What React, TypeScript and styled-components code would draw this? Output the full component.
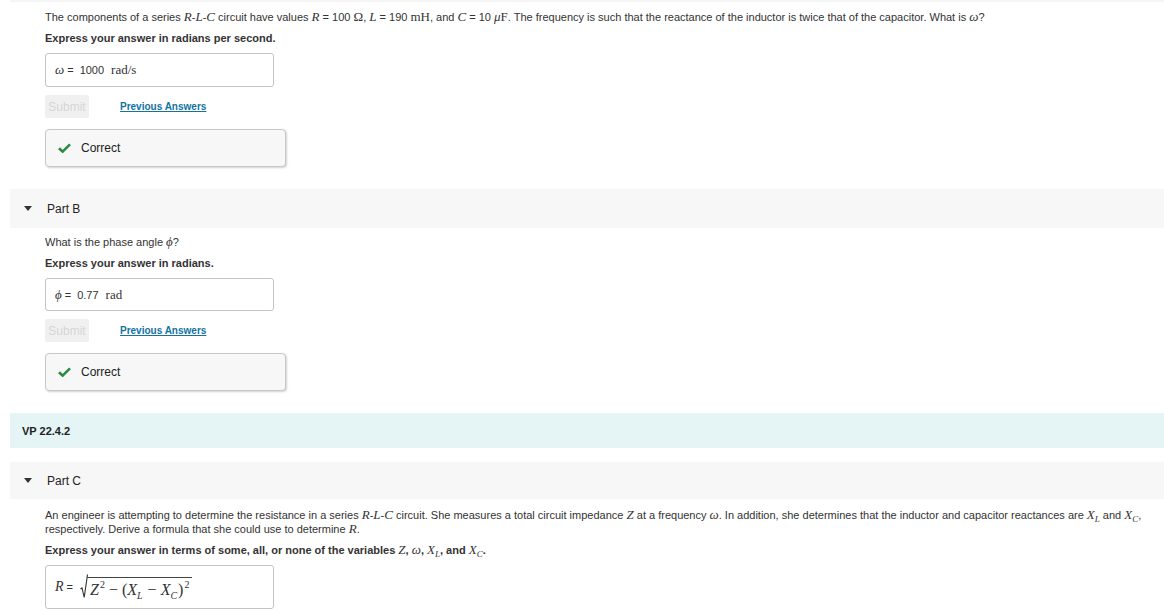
import React from 'react';
import styled, { createGlobalStyle } from 'styled-components';

const GlobalStyle = createGlobalStyle`
  body {
    margin: 0;
    background: #fff;
    font-family: "Liberation Sans", Arial, sans-serif;
    color: #333;
  }
`;

const Page = styled.div`
  padding-left: 10px;
  width: 1154px;
`;

const TopBar = styled.div`
  height: 2px;
  background: #f5f5f5;
`;

const Section = styled.div<{ $top?: number }>`
  padding: ${(p) => p.$top ?? 7}px 0 0 35px;
`;

const Question = styled.p`
  margin: 0;
  font-size: 11px;
  line-height: 13px;
  color: #333;
`;

const Instruction = styled.p`
  margin: 7px 0 0;
  font-size: 11px;
  line-height: 14px;
  font-weight: bold;
  color: #333;
`;

const M = styled.span`
  font-family: "Liberation Serif", "Times New Roman", serif;
  font-style: italic;
  font-weight: normal;
  font-size: 13px;
`;

const Mr = styled.span`
  font-family: "Liberation Serif", "Times New Roman", serif;
  font-weight: normal;
  font-size: 13px;
`;

const Sub = styled.sub`
  font-family: "Liberation Serif", "Times New Roman", serif;
  font-style: italic;
  font-weight: normal;
  font-size: 9px;
  vertical-align: -3px;
  line-height: 0;
`;

const Sup = styled.sup`
  font-family: "Liberation Serif", "Times New Roman", serif;
  font-weight: normal;
  font-size: 10px;
  vertical-align: 7px;
  line-height: 0;
`;

const Op = styled.span`
  font-family: "Liberation Serif", "Times New Roman", serif;
  margin: 0 4px;
`;

const AnswerBox = styled.div<{ $h?: number }>`
  margin-top: 8px;
  box-sizing: border-box;
  width: 229px;
  height: ${(p) => p.$h ?? 34}px;
  border: 1px solid #c4c4c4;
  border-radius: 3px;
  display: flex;
  align-items: center;
  padding-left: 9px;
  font-size: 11px;
  color: #333;
  white-space: pre;
`;

const Eq = styled.span<{ $after?: number }>`
  font-size: 11px;
  margin: 0 ${(p) => p.$after ?? 6}px 0 3px;
`;

const Unit = styled.span`
  font-family: "Liberation Serif", "Times New Roman", serif;
  font-size: 13px;
  margin-left: 7px;
`;

const Actions = styled.div`
  display: flex;
  align-items: center;
  margin-top: 8px;
  gap: 31px;
`;

const SubmitButton = styled.button`
  width: 44px;
  height: 23px;
  border: none;
  border-radius: 2px;
  background: #f0f0f0;
  color: #d6d6d6;
  font-family: "Liberation Sans", Arial, sans-serif;
  font-size: 12px;
  padding: 0;
`;

const PrevLink = styled.a`
  font-size: 10px;
  font-weight: bold;
  color: #1273a0;
  text-decoration: underline;
`;

const Feedback = styled.div`
  margin-top: 11px;
  box-sizing: border-box;
  width: 241px;
  height: 38px;
  background: #f7f7f7;
  border: 1px solid #c8c8c8;
  border-radius: 4px;
  box-shadow: 1px 1px 2px rgba(0, 0, 0, 0.18);
  display: flex;
  align-items: center;
  padding-left: 12px;
  gap: 10px;
  font-size: 12px;
  color: #222;
`;

const PartHeader = styled.div<{ $mt: number; $h: number }>`
  margin-top: ${(p) => p.$mt}px;
  height: ${(p) => p.$h}px;
  background: #f7f7f7;
  display: flex;
  align-items: center;
  padding-left: 14px;
  gap: 15px;
  font-size: 12px;
  color: #222;
`;

const Caret = styled.span`
  width: 0;
  height: 0;
  border-left: 4px solid transparent;
  border-right: 4px solid transparent;
  border-top: 5px solid #333;
`;

const VpHeader = styled.div`
  margin-top: 22px;
  height: 35px;
  background: #e5f5f6;
  display: flex;
  align-items: center;
  padding-left: 12px;
  font-size: 11px;
  font-weight: bold;
  color: #222;
`;

const Radical = styled.span`
  display: inline-flex;
  align-items: flex-end;
`;

const Radicand = styled.span`
  border-top: 1px solid #444;
  padding: 2px 3px 0 3px;
  line-height: 20px;
  font-family: "Liberation Serif", "Times New Roman", serif;
  font-size: 16px;

  ${M} {
    font-size: 16px;
  }

  ${Sub} {
    font-size: 10px;
    vertical-align: -4px;
    margin-right: 1px;
  }

  ${Sup} {
    margin-left: 1px;
  }
`;

const FormulaLetter = styled(M)`
  font-size: 14px;
`;

const Check = () => (
  <svg width="13" height="10" viewBox="0 0 13 10">
    <path d="M1 5.2 L4.6 8.6 L12 1.4" fill="none" stroke="#2b8a3e" strokeWidth="2.6" />
  </svg>
);

const RadicalSign = () => (
  <svg width="8" height="25" viewBox="0 0 8 25" style={{ marginRight: -1, marginBottom: 1 }}>
    <path d="M0.5 15 L2 14 L4.2 23.5 L7.5 0.5" fill="none" stroke="#333" strokeWidth="1.1" />
  </svg>
);

const SubmitRow = () => (
  <Actions>
    <SubmitButton disabled>Submit</SubmitButton>
    <PrevLink>Previous Answers</PrevLink>
  </Actions>
);

const CorrectBox = () => (
  <Feedback>
    <Check />
    <span>Correct</span>
  </Feedback>
);

export default function App() {
  return (
    <Page>
      <GlobalStyle />
      <TopBar />
      <Section $top={8}>
        <Question>
          The components of a series <M>R</M>-<M>L</M>-<M>C</M> circuit have values <M>R</M> = 100 <Mr>Ω</Mr>,{' '}
          <M>L</M> = 190 <Mr>mH</Mr>, and <M>C</M> = 10 <M>μ</M>
          <Mr>F</Mr>. The frequency is such that the reactance of the inductor is twice that of the capacitor. What is <M>ω</M>?
        </Question>
        <Instruction>Express your answer in radians per second.</Instruction>
        <AnswerBox>
          <M>ω</M>
          <Eq>=</Eq>1000<Unit>rad/s</Unit>
        </AnswerBox>
        <SubmitRow />
        <CorrectBox />
      </Section>
      <PartHeader $mt={22} $h={39}>
        <Caret />
        <span>Part B</span>
      </PartHeader>
      <Section $top={7}>
        <Question>
          What is the phase angle <M>ϕ</M>?
        </Question>
        <Instruction>Express your answer in radians.</Instruction>
        <AnswerBox $h={33}>
          <M>ϕ</M>
          <Eq>=</Eq>0.77<Unit>rad</Unit>
        </AnswerBox>
        <SubmitRow />
        <CorrectBox />
      </Section>
      <VpHeader>VP 22.4.2</VpHeader>
      <PartHeader $mt={14} $h={37}>
        <Caret />
        <span>Part C</span>
      </PartHeader>
      <Section $top={9}>
        <Question>
          An engineer is attempting to determine the resistance in a series <M>R</M>-<M>L</M>-<M>C</M> circuit. She measures a
          total circuit impedance <M>Z</M> at a frequency <M>ω</M>. In addition, she determines that the inductor and
          capacitor reactances are <M>X</M>
          <Sub>L</Sub> and <M>X</M>
          <Sub>C</Sub>, respectively. Derive a formula that she could use to determine <M>R</M>.
        </Question>
        <Instruction>
          Express your answer in terms of some, all, or none of the variables <M>Z</M>, <M>ω</M>, <M>X</M>
          <Sub>L</Sub>, and <M>X</M>
          <Sub>C</Sub>.
        </Instruction>
        <AnswerBox $h={44}>
          <FormulaLetter>R</FormulaLetter>
          <Eq $after={7}>=</Eq>
          <Radical>
            <RadicalSign />
            <Radicand>
              <M>Z</M>
              <Sup>2</Sup>
              <Op>−</Op>(<M>X</M>
              <Sub>L</Sub>
              <Op>−</Op>
              <M>X</M>
              <Sub>C</Sub>)<Sup>2</Sup>
            </Radicand>
          </Radical>
        </AnswerBox>
      </Section>
    </Page>
  );
}
